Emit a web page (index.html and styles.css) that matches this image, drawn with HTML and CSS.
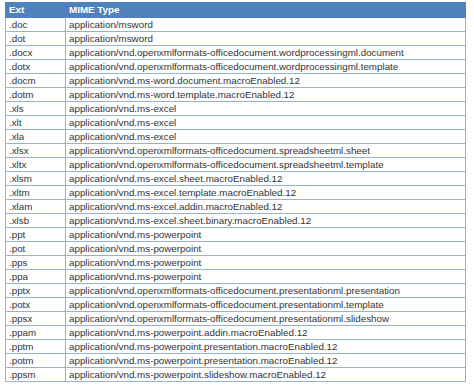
FILE: index.html
```html
<!DOCTYPE html>
<html lang="en">
<head>
    <meta charset="UTF-8">
    <title>MIME Types</title>
    <link rel="stylesheet" href="styles.css">
</head>
<body>
    <table class="mime-table">
        <thead>
            <tr><th class="ext">Ext</th><th>MIME Type</th></tr>
        </thead>
        <tbody>
            <tr><td>.doc</td><td>application/msword</td></tr>
            <tr><td>.dot</td><td>application/msword</td></tr>
            <tr><td>.docx</td><td>application/vnd.openxmlformats-officedocument.wordprocessingml.document</td></tr>
            <tr><td>.dotx</td><td>application/vnd.openxmlformats-officedocument.wordprocessingml.template</td></tr>
            <tr><td>.docm</td><td>application/vnd.ms-word.document.macroEnabled.12</td></tr>
            <tr><td>.dotm</td><td>application/vnd.ms-word.template.macroEnabled.12</td></tr>
            <tr><td>.xls</td><td>application/vnd.ms-excel</td></tr>
            <tr><td>.xlt</td><td>application/vnd.ms-excel</td></tr>
            <tr><td>.xla</td><td>application/vnd.ms-excel</td></tr>
            <tr><td>.xlsx</td><td>application/vnd.openxmlformats-officedocument.spreadsheetml.sheet</td></tr>
            <tr><td>.xltx</td><td>application/vnd.openxmlformats-officedocument.spreadsheetml.template</td></tr>
            <tr><td>.xlsm</td><td>application/vnd.ms-excel.sheet.macroEnabled.12</td></tr>
            <tr><td>.xltm</td><td>application/vnd.ms-excel.template.macroEnabled.12</td></tr>
            <tr><td>.xlam</td><td>application/vnd.ms-excel.addin.macroEnabled.12</td></tr>
            <tr><td>.xlsb</td><td>application/vnd.ms-excel.sheet.binary.macroEnabled.12</td></tr>
            <tr><td>.ppt</td><td>application/vnd.ms-powerpoint</td></tr>
            <tr><td>.pot</td><td>application/vnd.ms-powerpoint</td></tr>
            <tr><td>.pps</td><td>application/vnd.ms-powerpoint</td></tr>
            <tr><td>.ppa</td><td>application/vnd.ms-powerpoint</td></tr>
            <tr><td>.pptx</td><td>application/vnd.openxmlformats-officedocument.presentationml.presentation</td></tr>
            <tr><td>.potx</td><td>application/vnd.openxmlformats-officedocument.presentationml.template</td></tr>
            <tr><td>.ppsx</td><td>application/vnd.openxmlformats-officedocument.presentationml.slideshow</td></tr>
            <tr><td>.ppam</td><td>application/vnd.ms-powerpoint.addin.macroEnabled.12</td></tr>
            <tr><td>.pptm</td><td>application/vnd.ms-powerpoint.presentation.macroEnabled.12</td></tr>
            <tr><td>.potm</td><td>application/vnd.ms-powerpoint.presentation.macroEnabled.12</td></tr>
            <tr><td>.ppsm</td><td>application/vnd.ms-powerpoint.slideshow.macroEnabled.12</td></tr>
        </tbody>
    </table>
</body>
</html>
```

FILE: styles.css
```css
body {
    margin: 0;
    padding: 2px 0 0 5px;
    background: #fff;
    font-family: 'Liberation Sans', Arial, sans-serif;
    font-size: 9.8px;
    color: #333;
}
.mime-table {
    width: 461px;
    border-collapse: collapse;
    table-layout: fixed;
}
.mime-table th {
    background: #4f81bd;
    color: #fff;
    font-weight: bold;
    text-align: left;
    height: 14px;
    padding: 0 3px;
    line-height: 14px;
    border: 1px solid #4f81bd;
}
.mime-table th.ext {
    width: 53px;
}
.mime-table td {
    height: 13px;
    padding: 0 3px;
    line-height: 13px;
    border: 1px solid #95b3d7;
    white-space: nowrap;
}
```
